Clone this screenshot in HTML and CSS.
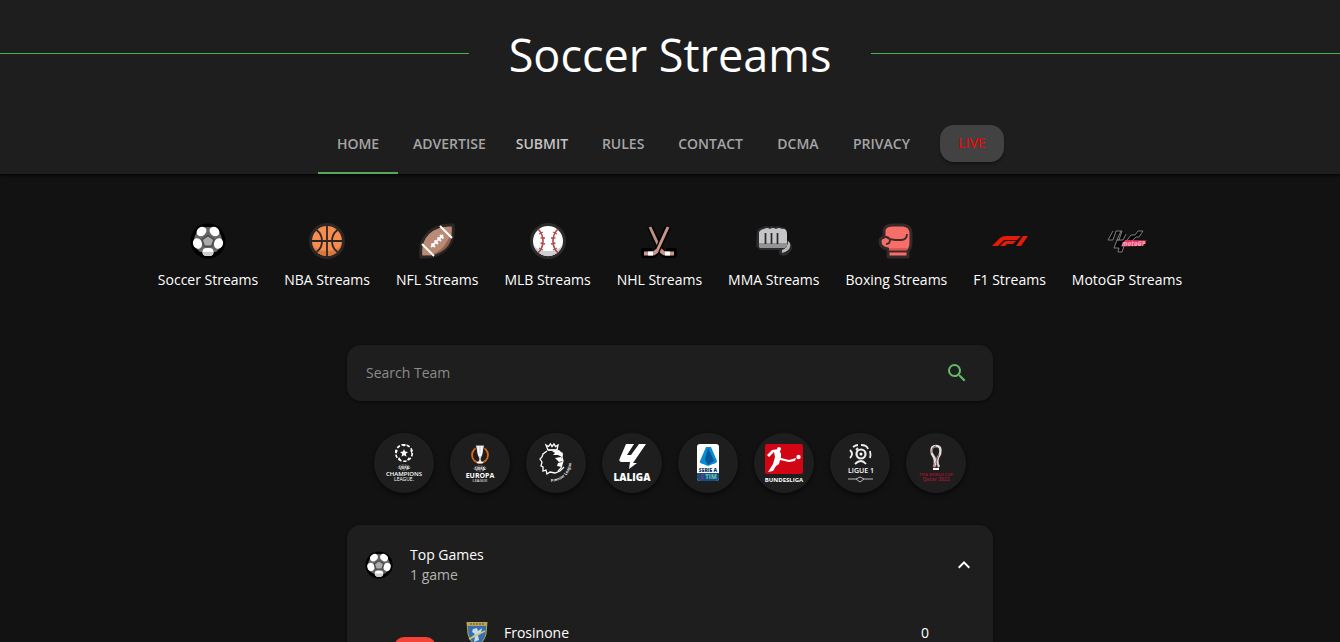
FILE: index.html
```
<!DOCTYPE html>
<html lang="en">
<head>
<meta charset="utf-8">
<meta name="viewport" content="width=device-width, initial-scale=1">
<title>Soccer Streams</title>
<link rel="stylesheet" href="styles.css">
</head>
<body>
<svg class="defs" aria-hidden="true">
  <symbol id="soccer" viewBox="0 0 36 36">
    <circle cx="18" cy="18" r="17.500" fill="#000"/>
    <circle cx="18" cy="18" r="14" fill="#666"/>
    <path d="M10 29 5 24 7 32H29L31 24 26 29Z" fill="#000"/>
    <g fill="#fff">
      <ellipse cx="11.500" cy="8.500" rx="5.300" ry="4.300" transform="rotate(-38 11.500 8.500)"/>
      <ellipse cx="24.500" cy="8.500" rx="5.300" ry="4.300" transform="rotate(38 24.500 8.500)"/>
      <ellipse cx="7.500" cy="20.500" rx="4.500" ry="5.400" transform="rotate(-18 7.500 20.500)"/>
      <ellipse cx="28.500" cy="20.500" rx="4.500" ry="5.400" transform="rotate(18 28.500 20.500)"/>
      <rect x="12.500" y="25" width="11" height="8" rx="4"/>
    </g>
    <path d="M12.500 29h11q0 4-4 4h-3q-4 0-4-4Z" fill="#ccc"/>
    <path d="m18 12.500 6 4.200-2.300 6.600h-7.400L12 16.700Z" fill="#aaa" stroke="#4c4c4c" stroke-width="1.600"/>
  </symbol>
</svg>

<header class="header">
  <div class="brand"><h1 class="brand-title">Soccer Streams</h1></div>
  <nav class="nav" aria-label="Main">
    <a class="tab tab-active" href="#home">HOME</a>
    <a class="tab" href="#advertise">ADVERTISE</a>
    <a class="tab tab-bright" href="#submit">SUBMIT</a>
    <a class="tab" href="#rules">RULES</a>
    <a class="tab" href="#contact">CONTACT</a>
    <a class="tab" href="#dcma">DCMA</a>
    <a class="tab" href="#privacy">PRIVACY</a>
    <button class="live" type="button">LIVE</button>
  </nav>
</header>

<main>
  <nav class="sports" aria-label="Sports">
    <a class="sport" href="#soccer-streams"><svg class="sport-icon" aria-hidden="true"><use href="#soccer"/></svg>Soccer Streams</a>
    <a class="sport" href="#nba"><svg class="sport-icon" viewBox="0 0 36 36" aria-hidden="true">
      <circle cx="18" cy="18" r="16.500" fill="#f68c50" stroke="#2c2624" stroke-width="3"/>
      <path d="M3.500 22A15 15 0 0 0 32.500 22Q28 28 18 28T3.500 22Z" fill="#d9773f"/>
      <path d="M18 2v32M2 18h32M7.500 7Q13 11 13 18T7.500 29M28.500 7Q23 11 23 18t5.500 11" fill="none" stroke="#2b2523" stroke-width="1.800"/></svg>NBA Streams</a>
    <a class="sport" href="#nfl"><svg class="sport-icon" viewBox="0 0 36 36" aria-hidden="true">
      <path d="M34 2Q36 17 27 26T2 34Q0 19 9 10T34 2Z" fill="#b98a75" stroke="#2c2624" stroke-width="3"/>
      <path d="M33 9Q33 20 26 26T8 33Q20 30 25 23T33 9Z" fill="#94634f"/>
      <path d="m21 3 12 12M3 21l12 12" stroke="#fff" stroke-width="2"/>
      <path d="M12 24 24 12M12.500 20.500l3.500 3.500M15.500 17.500l3.500 3.500M18.500 14.500l3.500 3.500M21 12l3.500 3.500" fill="none" stroke="#fff" stroke-width="1.800"/></svg>NFL Streams</a>
    <a class="sport" href="#mlb"><svg class="sport-icon" viewBox="0 0 36 36" aria-hidden="true">
      <circle cx="18" cy="18" r="16.500" fill="#fff" stroke="#2b2b2b" stroke-width="3"/>
      <path d="M3.500 22A15 15 0 0 0 32.500 22Q28 28 18 28T3.500 22Z" fill="#cfcfd2"/>
      <path d="M8 6Q13 11 13 18T8 30M28 6Q23 11 23 18t5 12" fill="none" stroke="#a84a4a" stroke-width="1.600"/>
      <path d="m9 11 4-2M10.500 15h4.500M10.500 20l4.500 1M9 25l4 2M27 11l-4-2M25.500 15h-4.500M25.500 20l-4.500 1M27 25l-4 2" stroke="#b54e4e" stroke-width="1.300"/></svg>MLB Streams</a>
    <a class="sport" href="#nhl"><svg class="sport-icon" viewBox="0 0 36 36" aria-hidden="true">
      <g fill="none" stroke-linejoin="round">
        <path d="m9 4 12 25q1 3 4 3h8v-4h-8M27 4 15 29q-1 3-4 3H3v-4h8" stroke="#000" stroke-width="6"/>
        <path d="m9 4 11 24" stroke="#bd8d80" stroke-width="3"/>
        <path d="M20 27q1.500 3.500 5 3.500h8" stroke="#c99588" stroke-width="4"/>
        <path d="M27 4 16 28" stroke="#000" stroke-width="5.500"/>
        <path d="M27 4 16 28" stroke="#c99588" stroke-width="3"/>
        <path d="M16 27q-1.500 3.500-5 3.500H3" stroke="#c99588" stroke-width="4"/>
        <path d="M7 30.500h5M24 30.500h5" stroke="#fff" stroke-width="4"/>
      </g></svg>NHL Streams</a>
    <a class="sport" href="#mma"><svg class="sport-icon" viewBox="0 0 36 36" aria-hidden="true">
      <path d="M1 8q1-3 6-4 3-2 6 0 3-2 6 0 3-2 6 0 6 0 6 6v7q5 2 5 8-2 7-9 8l-4-2v-4H4l-4-4Z" fill="#2b2b2d"/>
      <path d="M3 9q2-3 5-3 3-2 6 0 3-2 6 0 3-2 6 0 4-1 5 4v12q-1 3-3 3H5q-2 0-2-3Z" fill="#c5c5c7"/>
      <path d="M3 20h28v2q-1 3-3 3H5q-2 0-2-3Z" fill="#929295"/>
      <path d="M9.500 10v11M15.500 10v11M21.500 10v11" stroke="#29292b" stroke-width="1.700"/>
      <path d="M32 18q3 2 2 6-1 4-8 6v-3q6-2 6-9Z" fill="#b9b9bb"/></svg>MMA Streams</a>
    <a class="sport" href="#boxing"><svg class="sport-icon" viewBox="0 0 36 36" aria-hidden="true">
      <path d="M6 14V7q1-5 9-5h10q8 1 8 8v9q0 6-3 9v6H10v-8q-8-1-8-8 0-3 4-4Z" fill="#f76e68" stroke="#332928" stroke-width="3" stroke-linejoin="round"/>
      <path d="M11 25h18v3H11Z" fill="#d95852"/>
      <path d="M10 28.500h20M6 14q5-1 6 3 0 4-4 4M8 14q4 3 9 3h6q6 0 6-6" fill="none" stroke="#3b2a29" stroke-width="1.800"/></svg>Boxing Streams</a>
    <a class="sport" href="#f1"><svg class="sport-icon" viewBox="0 0 36 36" aria-hidden="true">
      <path d="M0 23 8 15q2-2 6-2h15l-4 4H14q-2 0-3 1l-5 5ZM8 23l4-4q1-1 3-1h9l-3 3h-6l-2 2ZM24 23l7-10h5l-7 10Z" fill="#e41b08"/></svg>F1 Streams</a>
    <a class="sport" href="#motogp"><svg class="sport-icon sport-icon-wide" viewBox="0 0 40 36" aria-hidden="true">
      <path d="m6 8-5 9h5l3-9h6l-3 9h-2l-3 8h5l-1 4h4l3-9 6-8h4l3-4h5l-4 6h-3l-6 6M14 8l-4 9h6l3-6" fill="#050505" stroke="#888" stroke-width=".9"/>
      <path d="m18 17 22 .5-3 1.500-3 4-20 .5Z" fill="#e83362"/>
      <text x="15" y="22.500" font-family="Open Sans" font-size="6" font-weight="800" font-style="italic" fill="#f8a5b9">motoGP</text></svg>MotoGP Streams</a>
  </nav>

  <div class="content">
    <form class="search" role="search">
      <input class="search-input" type="search" placeholder="Search Team" aria-label="Search Team">
      <button class="icon-button" type="submit" aria-label="Search"><svg class="search-icon" viewBox="0 0 24 24"><path fill="#66bb6a" d="M15.500 14h-.79l-.28-.27A6.471 6.471 0 0 0 16 9.500 6.500 6.500 0 1 0 9.500 16c1.610 0 3.090-.59 4.230-1.570l.27.28v.79l5 4.990L20.490 19zm-6 0C7.010 14 5 11.990 5 9.500S7.010 5 9.500 5 14 7.010 14 9.500 11.990 14 9.500 14"/></svg></button>
    </form>

    <nav class="leagues" aria-label="Leagues">
      <a class="league" href="#champions" aria-label="Champions League"><svg viewBox="0 0 60 60">
        <circle cx="30" cy="20" r="8.300" fill="none" stroke="#fff" stroke-width="1.600" stroke-dasharray="3.400 1.800"/>
        <path d="m30 16 1.100 2.600 2.900.3-2.200 1.900.7 2.900-2.500-1.500-2.500 1.500.7-2.900-2.200-1.900 2.900-.3ZM27 11.500l3 2 3-2ZM21.500 17l2.500.5-2 3.500ZM38.500 17l-2.500.5 2 3.500ZM24 26.500l1-2.500 2.500 3.500ZM36 26.500l-1-2.500-2.500 3.500Z" fill="#fff"/>
        <ellipse cx="30" cy="34.500" rx="6" ry="2.500" fill="none" stroke="#999" stroke-dasharray="2 1"/>
        <g fill="#fff" text-anchor="middle" font-family="Open Sans"><text x="30" y="36" font-size="4" font-weight="700">UEFA</text><text x="30" y="43" font-size="6" font-weight="600">CHAMPIONS</text><text x="30" y="48" font-size="5">LEAGUE.</text></g></svg></a>
      <a class="league" href="#europa" aria-label="Europa League"><svg viewBox="0 0 60 60">
        <circle cx="30" cy="22" r="8" fill="none" stroke="#e36b12" stroke-width="1.700"/>
        <path d="M25.500 12h9l-1.500 9-2 5 2 5h-6l2-5-2-5Z" fill="#ddd" stroke="#1e1e1e"/><path d="m28 13 1 9h2l1-9M27 29.500h6" stroke="#fff" stroke-width="1.300" fill="none"/>
        <ellipse cx="30" cy="35.500" rx="6" ry="2.500" fill="none" stroke="#999" stroke-dasharray="2 1"/>
        <g fill="#fff" text-anchor="middle" font-family="Open Sans"><text x="30" y="37" font-size="4" font-weight="700">UEFA</text><text x="30" y="45" font-size="7" font-weight="700">EUROPA</text><text x="30" y="49" font-size="4">LEAGUE</text></g></svg></a>
      <a class="league" href="#premier" aria-label="Premier League"><svg viewBox="0 0 60 60">
        <path d="m20 12 2.500 1.500 2-2.500 1.500 2.500 2-2.500 1.500 2.500L32 12l-1 5h-9ZM21 18l-4 3-1 3-2 2 2 3-1 4 2 1v4l3-1 1 4 3-2 5 1 5-2 4-4" fill="none" stroke="#fff" stroke-width="1.300"/>
        <path d="m26 18 7-1 4 4-1 3-4-2h-5l2-2ZM29 25l6-1 2 4-4 1ZM32 30l4-1v5l-5-1Z" fill="#fff"/>
        <path d="M34 20h2v4l1 4-2 7-3 3M22 17h9" fill="none" stroke="#fff" stroke-width="1.200"/>
        <path id="pl-arc" d="M25 49Q45 47 46 25" fill="none"/>
        <text font-family="Open Sans" font-size="4" font-weight="600" fill="#fff"><textPath href="#pl-arc">Premier League</textPath></text></svg></a>
      <a class="league" href="#laliga" aria-label="LaLiga"><svg viewBox="0 0 60 60">
        <path d="M24 11h8l-7 11h4l8-11h7L31 30h4l-8 6 1-7h-8q-4 0-2-4Z" fill="#fff"/>
        <text x="30" y="48" text-anchor="middle" font-family="Open Sans" font-size="10" font-weight="800" fill="#fff">LALIGA</text></svg></a>
      <a class="league" href="#seriea" aria-label="Serie A"><svg viewBox="0 0 60 60">
        <rect x="19" y="11" width="22" height="37" rx="3" fill="#fff"/>
        <path d="M19 40h22v5q0 3-3 3H22q-3 0-3-3Z" fill="#164f83"/>
        <path d="M28 14h5l6 14q0 2-4 3l-5 2-5-2q-4-1-3-3Z" fill="#078bd1"/><path d="m30 15-3 12 3 5 6-4Z" fill="#07569b"/>
        <g font-family="Open Sans" text-anchor="middle" font-weight="800"><text x="30" y="38.500" font-size="5" fill="#0b315c">SERIE A</text><text x="24" y="46" font-size="6" fill="#7c346f">E</text><text x="33" y="46" font-size="6" fill="#63b9b0">TIM</text></g></svg></a>
      <a class="league" href="#bundesliga" aria-label="Bundesliga"><svg viewBox="0 0 60 60">
        <rect x="11" y="11" width="38" height="30" rx="2" fill="#d20515"/>
        <circle cx="25" cy="16" r="2" fill="#fff"/><circle cx="44.500" cy="24" r="2.200" fill="#fff"/>
        <path d="m13 22 5-5 7-1 2 5v4l8 2 7-2-1 3-6 1-9-2-1 4-3 2-3 5-5 1 5-8 2-7-1-5-5 5Z" fill="#fff"/>
        <text x="30" y="48.500" text-anchor="middle" font-family="Open Sans" font-size="6" font-weight="700" fill="#fff">BUNDESLIGA</text></svg></a>
      <a class="league" href="#ligue1" aria-label="Ligue 1"><svg viewBox="0 0 60 60">
        <g fill="none" stroke="#eee"><circle cx="31" cy="21" r="4.500" stroke-width="2.200"/><path stroke-width="1.800" d="M23 14q3-2 5-2M31 12q6 0 7 4M40 18q1 4 0 7M20 17q4 4 0 8M25 31q6-6 11 0M26 17l2-2"/></g>
        <circle cx="31" cy="21" r="1.500" fill="#fff"/>
        <text x="31" y="40" text-anchor="middle" font-family="Open Sans" font-size="7" font-weight="600" fill="#fff">LIGUE 1</text>
        <path d="M18 46h8l4-2 4 2h9M26 46l4 3 4-3" fill="none" stroke="#bbb"/></svg></a>
      <a class="league" href="#worldcup" aria-label="World Cup"><svg viewBox="0 0 60 60">
        <path d="M28 34q3-7-2-13-2-8 4-8t4 8q-5 7-1 13" fill="none" stroke="#ddd" stroke-width="2.600"/>
        <path d="M26 20q0-7 4-7M33 21l-3 8 2 7M28 30v6" fill="none" stroke="#8f4650" stroke-width="1"/><path d="M27 36h6" stroke="#fff" stroke-width="2"/>
        <g fill="#96152f" font-family="Open Sans" text-anchor="middle" font-weight="700"><text x="30" y="43" font-size="4">FIFA WORLD CUP</text><text x="30" y="48" font-size="5">Qatar 2022</text></g></svg></a>
    </nav>

    <section class="games">
      <button class="games-head" type="button" aria-expanded="true">
        <svg class="games-icon" aria-hidden="true"><use href="#soccer"/></svg>
        <span class="games-labels"><span>Top Games</span><span class="games-count">1 game</span></span>
        <svg class="chevron" viewBox="0 0 24 24" aria-hidden="true"><path fill="#fff" d="m12 8-6 6 1.410 1.410L12 10.830l4.590 4.580L18 14z"/></svg>
      </button>
      <div class="match">
        <div class="status"></div>
        <svg class="crest" viewBox="0 0 22 24" aria-hidden="true">
          <path d="M1 0h20l-1 12q-2 8-9 12-7-4-9-12Z" fill="#376eaf" stroke="#b8a456"/>
          <path d="M1 0h20v4H1Z" fill="#b8a456"/><path d="M4 2h14" stroke="#565231" stroke-dasharray="2 1"/>
          <path d="m7 7 4-1 1 3 4-3-1 5-3 2 1 5-5 2 1-5-4 1 4-4-3-2Z" fill="#c5dbe7"/><path d="m3 17 16-8" stroke="#cfc775" stroke-width="1.500"/></svg>
        <span class="team">Frosinone</span>
        <span class="score">0</span>
      </div>
    </section>
  </div>
</main>
</body>
</html>
```
FILE: styles.css
```
* { box-sizing: border-box; }
html { scrollbar-width: none; }
body {
  margin: 0;
  background: #121212;
  color: #fff;
  font-family: "Open Sans", "Noto Sans", sans-serif;
  font-size: 14px;
  line-height: 20px;
}
a { color: inherit; text-decoration: none; }
button { border: 0; padding: 0; background: none; color: inherit; font: inherit; cursor: pointer; }
.defs { display: none; }

.header { background: #1e1e1e; box-shadow: 0 1px 3px #000; }
.brand { display: flex; align-items: center; height: 114px; padding-bottom: 7px; }
.brand::before, .brand::after { content: ""; flex: 1; height: 1px; background: #4caf50; }
.brand-title { margin: 0 40px; padding-top: 2px; font-size: 45px; font-weight: 400; line-height: 64px; }
.nav { display: flex; flex-wrap: wrap; justify-content: center; align-items: center; }
.tab {
  display: flex; align-items: center; justify-content: center;
  min-width: 80px; height: 60px; padding: 2px 15px 0;
  border-bottom: 2px solid transparent;
  color: #a5a5a5; font-weight: 600;
}
.tab-active { border-color: #57a85b; }
.tab-bright { color: #c5c5c5; }
.live {
  width: 64px; height: 37px; margin: 0 18px 2px 15px;
  border-radius: 14px; background: #424242; color: #f00;
  box-shadow: 0 2px 3px #0006;
}

.sports { display: flex; flex-wrap: wrap; justify-content: center; gap: 26px; padding: 49px 16px 55px; }
.sport { display: flex; flex-direction: column; align-items: center; gap: 11px; }
.sport-icon { width: 36px; height: 36px; }
.sport-icon-wide { width: 40px; }

.content { width: 100%; max-width: 646px; margin: 0 auto; }
.search, .games { background: #1e1e1e; border-radius: 14px; box-shadow: 0 1px 3px #0008; }
.search { display: flex; align-items: center; height: 56px; padding: 0 24px 0 19px; }
.search-input {
  flex: 1; min-width: 0; border: 0; padding: 0;
  background: none; color: #fff; font: inherit; outline: 0;
}
.search-input::placeholder { color: #8b8b8b; opacity: 1; }
.icon-button { display: flex; }
.search-icon { width: 24px; height: 24px; }
.leagues { display: flex; flex-wrap: wrap; justify-content: center; gap: 16px; padding: 32px 0; }
.league { display: flex; width: 60px; height: 60px; border-radius: 50%; background: #1e1e1e; box-shadow: 0 2px 4px #0009; }
.league svg { width: 60px; height: 60px; }

.games-head { display: flex; align-items: center; width: 100%; height: 80px; padding: 0 17px 0 18px; text-align: left; }
.games-icon { width: 28px; height: 28px; }
.games-labels { display: flex; flex: 1; flex-direction: column; margin-left: 17px; }
.games-count { color: #b3b3b3; }
.chevron { width: 24px; height: 24px; }
.match { display: flex; align-items: flex-start; gap: 16px; padding: 17px 64px 16px 47px; }
.status { width: 42px; height: 20px; margin: 15px 14px 0 0; border-radius: 10px; background: #f44336; }
.crest { width: 22px; height: 24px; }
.team { flex: 1; padding-top: 1px; }
.score { padding-top: 1px; }
```
